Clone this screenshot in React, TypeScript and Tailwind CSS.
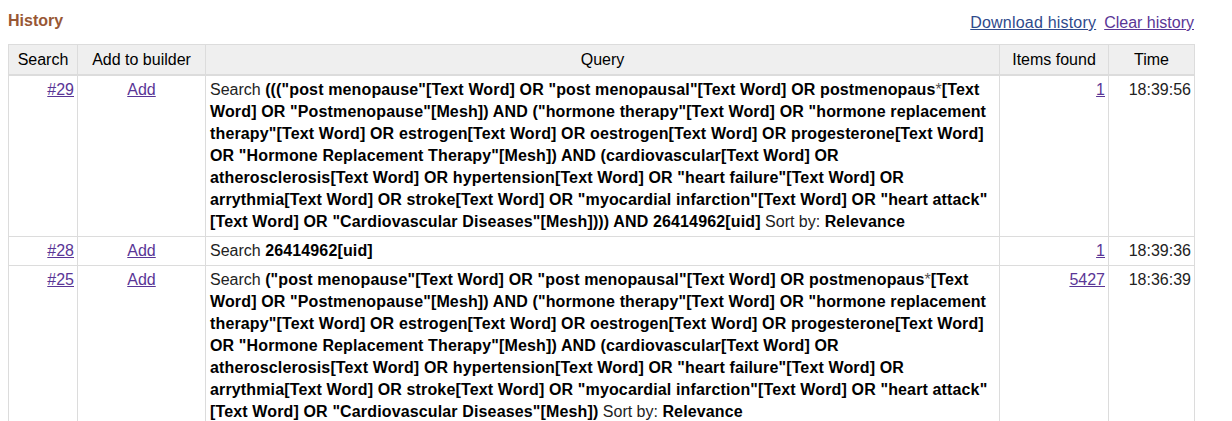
const middle = [
  "Word] OR \"Postmenopause\"[Mesh]) AND (\"hormone therapy\"[Text Word] OR \"hormone replacement",
  "therapy\"[Text Word] OR estrogen[Text Word] OR oestrogen[Text Word] OR progesterone[Text Word]",
  "OR \"Hormone Replacement Therapy\"[Mesh]) AND (cardiovascular[Text Word] OR",
  "atherosclerosis[Text Word] OR hypertension[Text Word] OR \"heart failure\"[Text Word] OR",
  "arrythmia[Text Word] OR stroke[Text Word] OR \"myocardial infarction\"[Text Word] OR \"heart attack\"",
];

const rows = [
  {
    id: "#29",
    items: "1",
    time: "18:39:56",
    lines: [
      "(((\"post menopause\"[Text Word] OR \"post menopausal\"[Text Word] OR postmenopaus*[Text",
      ...middle,
      "[Text Word] OR \"Cardiovascular Diseases\"[Mesh]))) AND 26414962[uid]",
    ],
    sort: true,
  },
  {
    id: "#28",
    items: "1",
    time: "18:39:36",
    lines: ["26414962[uid]"],
    sort: false,
  },
  {
    id: "#25",
    items: "5427",
    time: "18:36:39",
    lines: [
      "(\"post menopause\"[Text Word] OR \"post menopausal\"[Text Word] OR postmenopaus*[Text",
      ...middle,
      "[Text Word] OR \"Cardiovascular Diseases\"[Mesh])",
    ],
    sort: true,
  },
];

const link = "text-[#5a3696] underline";
const cell = "border border-[#dcdcdc] pt-[3px] pb-[3px]";

function QueryLine({ text }: { text: string }) {
  const parts = text.split("*");
  return (
    <b className="text-black tracking-[0.14px]">
      {parts.map((p, i) => (
        <span key={i}>
          {i > 0 && <span className="font-normal text-[#555] tracking-normal">*</span>}
          {p}
        </span>
      ))}
    </b>
  );
}

export default function App() {
  return (
    <div className="bg-white w-[1232px] h-[421px] overflow-hidden px-2 font-['Liberation_Sans',Arial,sans-serif] text-[16px] leading-[22px] text-[#222]">
      <div className="flex items-start justify-between w-[1186px] pt-[10px] h-[44px]">
        <h2 className="font-bold text-[#985735] leading-[22px]">History</h2>
        <div className="flex gap-2 leading-[22px] pt-[2px]">
          <a href="#" className="text-[#2f4a8c] underline tracking-[0.2px]">Download history</a>
          <a href="#" className="text-[#5a3696] underline">Clear history</a>
        </div>
      </div>
      <table className="border-collapse w-[1186px] table-fixed">
        <colgroup>
          <col className="w-[69px]" />
          <col className="w-[128px]" />
          <col className="w-[794px]" />
          <col className="w-[109px]" />
          <col className="w-[86px]" />
        </colgroup>
        <thead>
          <tr className="bg-[#efefef]">
            {["Search", "Add to builder", "Query", "Items found", "Time"].map((h) => (
              <th key={h} className="border border-[#dcdcdc] border-b-2 font-normal text-black text-center px-1 pt-[4px] pb-[3px]">
                {h}
              </th>
            ))}
          </tr>
        </thead>
        <tbody>
          {rows.map((r) => (
            <tr key={r.id} className="align-top">
              <td className={`${cell} text-right pr-[3px] pl-1`}>
                <a href="#" className={link}>{r.id}</a>
              </td>
              <td className={`${cell} text-center px-1`}>
                <a href="#" className={link}>Add</a>
              </td>
              <td className={`${cell} text-left pl-[4px] pr-1 whitespace-nowrap`}>
                {r.lines.map((ln, i) => (
                  <div key={i}>
                    {i === 0 && "Search "}
                    <QueryLine text={ln} />
                    {r.sort && i === r.lines.length - 1 && (
                      <>
                        {" "}Sort by: <b className="text-black tracking-[0.14px]">Relevance</b>
                      </>
                    )}
                  </div>
                ))}
              </td>
              <td className={`${cell} text-right pr-[3px] pl-1`}>
                <a href="#" className={link}>{r.items}</a>
              </td>
              <td className={`${cell} text-right pr-[3px] pl-1`}>{r.time}</td>
            </tr>
          ))}
        </tbody>
      </table>
    </div>
  );
}
